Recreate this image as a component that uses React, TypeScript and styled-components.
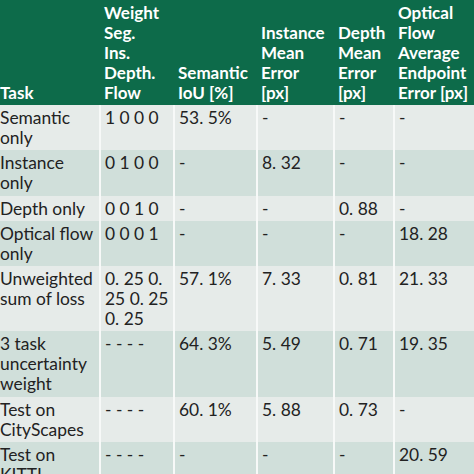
import React from "react";
import styled, { createGlobalStyle } from "styled-components";

const Global = createGlobalStyle`
  html, body { margin: 0; padding: 0; background: #e6ebe9; overflow: hidden; }
  body { width: 474px; height: 474px; }
`;

const Frame = styled.div`
  width: 474px;
  height: 474px;
  overflow: hidden;
`;

const Table = styled.table`
  margin-left: -4px;
  border-collapse: collapse;
  table-layout: fixed;
  width: 482px;
  font-family: Lato, "Open Sans", sans-serif;
  font-size: 17.4px;
  line-height: 20px;
  color: #222;
`;

const Head = styled.th`
  background: #0d6b4a;
  color: #fff;
  font-weight: 700;
  font-size: 17px;
  text-align: left;
  vertical-align: bottom;
  padding: 3px 4px 2px 4px;
`;

const Row = styled.tr<{ $alt: boolean }>`
  background: ${(p) => (p.$alt ? "#d0dfda" : "#e6ebe9")};
`;

const Cell = styled.td`
  vertical-align: top;
  padding: 3px 4px 2.3px;
  border-left: 2px solid #f7f9f8;
  &:first-child { border-left: none; }
  word-wrap: break-word;
`;

const widths = [104, 74, 83, 77, 60, 84];

const headers: React.ReactNode[] = [
  "Task",
  <>Weight<br />Seg.<br />Ins.<br />Depth.<br />Flow</>,
  <>Semantic<br />IoU [%]</>,
  <>Instance<br />Mean<br />Error<br />[px]</>,
  <>Depth<br />Mean<br />Error<br />[px]</>,
  <>Optical<br />Flow<br />Average<br />Endpoint<br />Error [px]</>,
];

const rows: string[][] = [
  ["Semantic only", "1 0 0 0", "53. 5%", "-", "-", "-"],
  ["Instance only", "0 1 0 0", "-", "8. 32", "-", "-"],
  ["Depth only", "0 0 1 0", "-", "-", "0. 88", "-"],
  ["Optical flow only", "0 0 0 1", "-", "-", "-", "18. 28"],
  ["Unweighted sum of loss", "0. 25 0. 25 0. 25 0. 25", "57. 1%", "7. 33", "0. 81", "21. 33"],
  ["3 task uncertainty weight", "- - - -", "64. 3%", "5. 49", "0. 71", "19. 35"],
  ["Test on CityScapes", "- - - -", "60. 1%", "5. 88", "0. 73", "-"],
  ["Test on KITTI", "- - - -", "-", "-", "-", "20. 59"],
];

export default function App() {
  return (
    <Frame>
      <Global />
      <Table>
        <colgroup>
          {widths.map((w, i) => (
            <col key={i} style={{ width: w }} />
          ))}
        </colgroup>
        <thead>
          <tr>
            {headers.map((h, i) => (
              <Head key={i}>{h}</Head>
            ))}
          </tr>
        </thead>
        <tbody>
          {rows.map((r, i) => (
            <Row key={i} $alt={i % 2 === 1}>
              {r.map((c, j) => (
                <Cell key={j}>{c}</Cell>
              ))}
            </Row>
          ))}
        </tbody>
      </Table>
    </Frame>
  );
}
